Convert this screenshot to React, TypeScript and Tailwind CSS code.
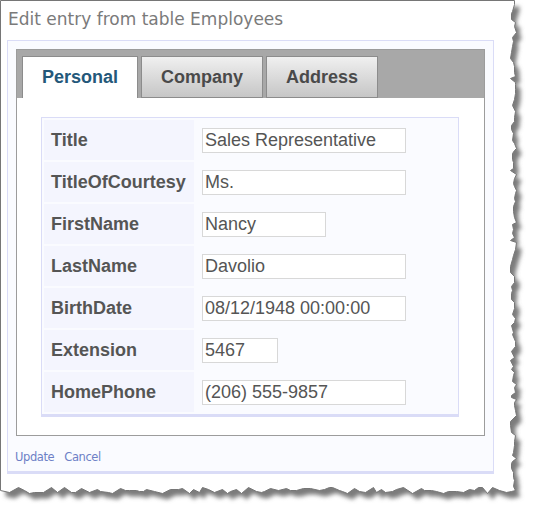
import React from 'react';

const FIELDS = [
  { label: 'Title', value: 'Sales Representative', width: 'w-[204px]' },
  { label: 'TitleOfCourtesy', value: 'Ms.', width: 'w-[204px]' },
  { label: 'FirstName', value: 'Nancy', width: 'w-[124px]' },
  { label: 'LastName', value: 'Davolio', width: 'w-[204px]' },
  { label: 'BirthDate', value: '08/12/1948 00:00:00', width: 'w-[204px]' },
  { label: 'Extension', value: '5467', width: 'w-[76px]' },
  { label: 'HomePhone', value: '(206) 555-9857', width: 'w-[204px]' },
];

const TABS = ['Personal', 'Company', 'Address'];

// torn paper edge for the screenshot frame
function tornPath() {
  let s = 11;
  const r = () => {
    s = (s * 9301 + 49297) % 233280;
    return s / 233280;
  };
  const pts: [number, number][] = [[0.5, 0.5], [514.5, 0.5]];
  for (let y = 4; y < 486; y += 2 + r() * 5) {
    pts.push([Math.round(513 + (r() - 0.5) * 6) + 0.5, Math.round(y) + 0.5]);
  }
  pts.push([515.5, 490.5]);
  for (let x = 511; x > 3; x -= 3 + r() * 6) {
    pts.push([Math.round(x) + 0.5, Math.round(490 + (r() - 0.5) * 6) + 0.5]);
  }
  pts.push([0.5, 490.5]);
  return 'M' + pts.map(p => p.join(',')).join(' L') + ' Z';
}

const PATH = tornPath();

function Frame() {
  return (
    <svg className="absolute inset-0 pointer-events-none" width="533" height="512">
      <defs>
        <filter id="blur" x="-5%" y="-5%" width="110%" height="110%">
          <feGaussianBlur stdDeviation="2.2" />
        </filter>
      </defs>
      <path d={PATH} fill="#7c7c7c" transform="translate(5,6)" filter="url(#blur)" />
      <path d={PATH} fill="#ffffff" stroke="#767676" strokeWidth="1" />
    </svg>
  );
}

export default function App() {
  return (
    <div className="relative w-[533px] h-[512px] bg-white overflow-hidden font-['Liberation_Sans',Arial,sans-serif]">
      <Frame />
      <div className="relative">
        {/* Header */}
        <div className="h-[40px] pl-[8px] pt-[9px] text-[17px] leading-[20px] text-[#7a7a7a] font-['DejaVu_Sans',sans-serif]">
          Edit entry from table Employees
        </div>

        {/* Panel */}
        <div className="ml-[7px] w-[487px] border border-b-[3px] border-[#dadcf7] bg-[#fafbff] pt-[8px] px-[8px]">
          <div className="border border-[#9c9c9c]">
            {/* Tabs */}
            <div className="flex gap-[3px] bg-[#a8a8a8] pl-[5px] pt-[6px]">
              {TABS.map((tab, i) => (
                <div
                  key={tab}
                  className={
                    i === 0
                      ? 'h-[42px] px-[19px] flex items-center border border-b-0 border-[#8c8c8c] bg-white text-[18px] font-bold text-[#24587a]'
                      : 'h-[42px] px-[19px] flex items-center border border-[#8c8c8c] bg-gradient-to-b from-[#f0f0f0] to-[#c6c6c6] text-[18px] font-bold text-[#4a4a4a]'
                  }
                >
                  {tab}
                </div>
              ))}
            </div>

            {/* Tab content */}
            <div className="bg-white pt-[19px] pl-[24px] pb-[18px]">
              <div className="w-[418px] border border-b-[3px] border-[#dadcf7] bg-[#fafbff] p-[2px] grid grid-cols-[150px_1fr] gap-[2px]">
                {FIELDS.map((f) => (
                  <React.Fragment key={f.label}>
                    <div className="h-[40px] flex items-center pl-[7px] bg-[#f4f5fe] text-[18px] font-bold text-[#555555]">
                      {f.label}
                    </div>
                    <div className="h-[40px] flex items-center pl-[6px]">
                      <input
                        readOnly
                        defaultValue={f.value}
                        className={`${f.width} h-[25px] border border-[#d8d8d8] bg-white pl-[2px] text-[18px] text-[#555555] outline-none font-['Liberation_Sans',Arial,sans-serif]`}
                      />
                    </div>
                  </React.Fragment>
                ))}
              </div>
            </div>
          </div>

          {/* Actions */}
          <div className="flex gap-[10px] -ml-[1px] mt-[14px] h-[21px] text-[11.5px] leading-[14px] text-[#6d80c6] font-['DejaVu_Sans',sans-serif] tracking-[-0.4px]">
            <a className="cursor-pointer">Update</a>
            <a className="cursor-pointer">Cancel</a>
          </div>
        </div>
      </div>
    </div>
  );
}
